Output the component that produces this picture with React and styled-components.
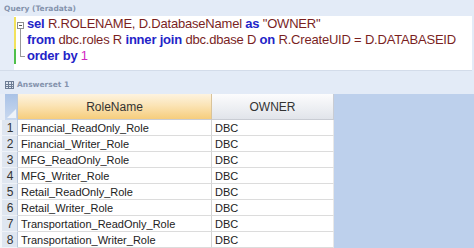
import React from 'react';
import styled, { createGlobalStyle } from 'styled-components';

const GlobalStyle = createGlobalStyle`
  html, body {
    margin: 0;
    padding: 0;
    background: #e3ebf7;
  }
  body {
    font-family: "Liberation Sans", Arial, sans-serif;
  }
`;

const Window = styled.div`
  width: 474px;
  height: 248px;
  overflow: hidden;
  display: flex;
  flex-direction: column;
  background: #e3ebf7;
`;

const PaneTitle = styled.div`
  height: 17px;
  display: flex;
  align-items: center;
  gap: 3px;
  padding-left: ${(p) => p.$indent || 4}px;
  font-family: "DejaVu Sans", sans-serif;
  font-size: 7.5px;
  font-weight: bold;
  color: #8593ad;
`;

const Editor = styled.div`
  height: 56px;
  display: flex;
  margin-right: 2px;
  background: #fff;
  border-bottom: 1px solid #d3dcea;
  overflow: hidden;
`;

const Gutter = styled.div`
  width: 14px;
  flex-shrink: 0;
  background: #e6edf8;
`;

const ChangeBar = styled.div`
  width: 2px;
  flex-shrink: 0;
  display: flex;
  flex-direction: column;
  padding-top: 1px;
`;

const ChangeMark = styled.div`
  height: ${(p) => p.$h}px;
  background: ${(p) => p.$color};
`;

const FoldColumn = styled.div`
  width: 11px;
  flex-shrink: 0;
  position: relative;
`;

const FoldBox = styled.div`
  position: absolute;
  left: 1px;
  top: 6px;
  width: 5px;
  height: 5px;
  border: 1px solid #8e8e8e;
  background: #fff;
  &::after {
    content: '';
    position: absolute;
    left: 1px;
    right: 1px;
    top: 2px;
    height: 1px;
    background: #555;
  }
`;

const FoldLine = styled.div`
  position: absolute;
  left: 4px;
  top: 13px;
  width: 4px;
  height: 27px;
  border-left: 1px solid #9a9a9a;
  border-bottom: 1px solid #9a9a9a;
`;

const Code = styled.div`
  display: flex;
  flex-direction: column;
  font-family: "Liberation Sans", Arial, sans-serif;
  font-size: 13px;
  letter-spacing: -0.2px;
  white-space: pre;
`;

const CodeLine = styled.div`
  height: 16px;
  line-height: 16px;
  color: #7a1f1f;
`;

const Kw = styled.span`
  color: #1f24c8;
  font-weight: bold;
`;

const Num = styled.span`
  color: #d126c2;
`;

const Spacer = styled.div`
  height: 6px;
`;

const GridIcon = () => (
  <svg width="9" height="8" viewBox="0 0 9 8">
    <rect x="0" y="0" width="9" height="8" fill="#6d7d95" />
    <rect x="1" y="1" width="2" height="2" fill="#dfe6f1" />
    <rect x="4" y="1" width="2" height="2" fill="#dfe6f1" />
    <rect x="7" y="1" width="1" height="2" fill="#dfe6f1" />
    <rect x="1" y="4" width="2" height="1" fill="#dfe6f1" />
    <rect x="4" y="4" width="2" height="1" fill="#dfe6f1" />
    <rect x="7" y="4" width="1" height="1" fill="#dfe6f1" />
    <rect x="1" y="6" width="2" height="1" fill="#dfe6f1" />
    <rect x="4" y="6" width="2" height="1" fill="#dfe6f1" />
    <rect x="7" y="6" width="1" height="1" fill="#dfe6f1" />
  </svg>
);

const GridArea = styled.div`
  flex: 1;
  display: flex;
  margin-top: 1px;
  background: #bdd0ec;
`;

const Table = styled.div`
  width: 334px;
  display: grid;
  grid-template-columns: 18px 194px 122px;
  grid-auto-rows: 16px;
  grid-template-rows: 26px;
  background: #fff;
`;

const Corner = styled.div`
  position: relative;
  border-left: 5px solid #e9eef6;
  background: linear-gradient(180deg, #a9c2e6 0%, #c9d9f0 100%);
  border-right: 1px solid #b9c7dc;
  &::after {
    content: '';
    position: absolute;
    right: 1px;
    bottom: 2px;
    border-style: solid;
    border-width: 0 0 9px 9px;
    border-color: transparent transparent #eef3fa transparent;
  }
`;

const HeadCell = styled.div`
  display: flex;
  align-items: center;
  justify-content: center;
  font-size: 12px;
  color: #333;
  background: ${(p) =>
    p.$active
      ? 'linear-gradient(180deg, #fdf3e0 0%, #fbe4b6 45%, #f6cd7c 100%)'
      : 'linear-gradient(180deg, #fcfcfd 0%, #eceef2 60%, #e1e4ea 100%)'};
  border-right: 1px solid ${(p) => (p.$active ? '#d9c39a' : '#c9ccd3')};
  border-bottom: 1px solid #c9ccd3;
`;

const RowNum = styled.div`
  display: flex;
  align-items: center;
  justify-content: center;
  padding-left: 1px;
  font-size: 12px;
  color: #333;
  background: #dfe6f0;
  border-left: 2px solid #f4f6fa;
  border-right: 1px solid #b9c7dc;
  border-bottom: 1px solid #eef2f8;
`;

const Cell = styled.div`
  display: flex;
  align-items: center;
  padding-left: 3px;
  font-size: 11px;
  color: #222;
  border-bottom: 1px solid #dcdcdc;
  border-right: 1px solid ${(p) => (p.$last ? '#e8e8e8' : '#d4d4d4')};
  white-space: nowrap;
  overflow: hidden;
`;

const rows = [
  'Financial_ReadOnly_Role',
  'Financial_Writer_Role',
  'MFG_ReadOnly_Role',
  'MFG_Writer_Role',
  'Retail_ReadOnly_Role',
  'Retail_Writer_Role',
  'Transportation_ReadOnly_Role',
  'Transportation_Writer_Role',
];

export default function App() {
  return (
    <>
      <GlobalStyle />
      <Window>
        <PaneTitle>Query (Teradata)</PaneTitle>
        <Editor>
          <Gutter />
          <ChangeBar>
            <ChangeMark $h={32} $color="#f2e25c" />
            <ChangeMark $h={15} $color="#4fc04a" />
          </ChangeBar>
          <FoldColumn>
            <FoldBox />
            <FoldLine />
          </FoldColumn>
          <Code>
            <CodeLine>
              <Kw>sel</Kw> R.ROLENAME, D.DatabaseNamel <Kw>as</Kw> "OWNER"
            </CodeLine>
            <CodeLine>
              <Kw>from</Kw> dbc.roles R <Kw>inner join</Kw> dbc.dbase D <Kw>on</Kw> R.CreateUID = D.DATABASEID
            </CodeLine>
            <CodeLine>
              <Kw>order by</Kw> <Num>1</Num>
            </CodeLine>
          </Code>
        </Editor>
        <Spacer />
        <PaneTitle $indent={5}>
          <GridIcon />
          Answerset 1
        </PaneTitle>
        <GridArea>
          <Table>
            <Corner />
            <HeadCell $active>RoleName</HeadCell>
            <HeadCell>OWNER</HeadCell>
            {rows.map((name, i) => (
              <React.Fragment key={name}>
                <RowNum>{i + 1}</RowNum>
                <Cell>{name}</Cell>
                <Cell $last>DBC</Cell>
              </React.Fragment>
            ))}
          </Table>
        </GridArea>
      </Window>
    </>
  );
}
